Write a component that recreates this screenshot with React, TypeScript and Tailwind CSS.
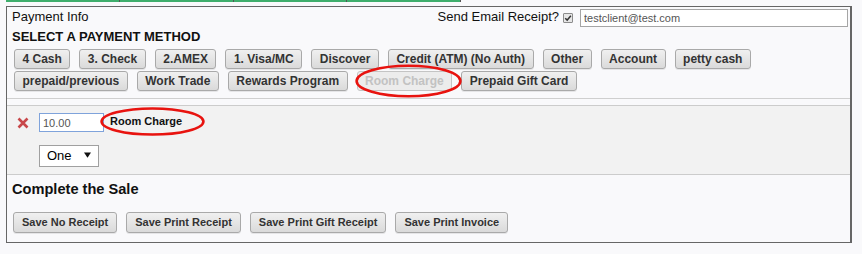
const methodsRow1 = [
  "4 Cash",
  "3. Check",
  "2.AMEX",
  "1. Visa/MC",
  "Discover",
  "Credit (ATM) (No Auth)",
  "Other",
  "Account",
  "petty cash",
];

const methodsRow2 = ["prepaid/previous", "Work Trade", "Rewards Program", "Room Charge", "Prepaid Gift Card"];

const saveButtons = ["Save No Receipt", "Save Print Receipt", "Save Print Gift Receipt", "Save Print Invoice"];

function PayButton({ label, disabled }: { label: string; disabled?: boolean }) {
  return (
    <button
      className={
        disabled
          ? "h-[20px] px-[7.5px] text-[12px] leading-[14px] font-bold rounded-[3px] border border-[#c4c4c4] bg-[#ececec] text-[#c2c2c2] whitespace-nowrap"
          : "h-[20px] px-[7.5px] text-[12px] leading-[14px] font-bold rounded-[3px] border border-[#a9a9a9] bg-linear-to-b from-[#f0f0f0] to-[#dadada] text-[#333] whitespace-nowrap shadow-[0_1px_0_rgba(0,0,0,0.08)]"
      }
    >
      {label}
    </button>
  );
}

function Ellipse({ className }: { className: string }) {
  return (
    <svg className={className} viewBox="0 0 100 100" preserveAspectRatio="none" aria-hidden="true">
      <ellipse cx="50" cy="50" rx="48.5" ry="45" fill="none" stroke="#e8130f" strokeWidth="2.6" vectorEffect="non-scaling-stroke" />
    </svg>
  );
}

export default function App() {
  return (
    <div className="w-[862px] h-[254px] bg-[#f9f9fb] font-['Liberation_Sans',Arial,sans-serif] text-[#111] overflow-hidden">
      {/* top tab strip */}
      <div className="flex h-[2px] ml-[6px] w-[455px]">
        <div className="w-[114px] bg-[#3fae6c] border-r border-[#555]" />
        <div className="w-[114px] bg-[#3fae6c] border-r border-[#555]" />
        <div className="w-[113px] bg-[#3fae6c] border-r border-[#555]" />
        <div className="w-[114px] bg-[#3fae6c] border-r border-[#555]" />
      </div>

      <div className="relative ml-[6px] mt-[4px] w-[846px] h-[237px] border border-r-2 border-[#666] bg-[#f9f9fb]">
        {/* header */}
        <div className="flex items-start justify-between pl-[5px] pr-[2px] pt-[1px]">
          <div className="text-[13px] leading-[15px] mt-[1px]">Payment Info</div>
          <div className="flex items-start">
            <span className="text-[13px] leading-[15px] mt-[1px]">Send Email Receipt?</span>
            <span className="ml-[4px] mt-[5px] w-[10px] h-[10px] border border-[#8c8c8c] bg-[#e6e6e6] rounded-[1px] flex items-center justify-center">
              <svg viewBox="0 0 10 10" className="w-[8px] h-[8px]">
                <path d="M1.5 5.2 L4 7.6 L8.6 2.2" fill="none" stroke="#333" strokeWidth="1.8" />
              </svg>
            </span>
            <input
              readOnly
              value="testclient@test.com"
              className="ml-[7px] mt-[1px] w-[268px] h-[18px] border border-[#a5a5a5] bg-white px-[3px] text-[11px] text-[#555] outline-none"
            />
          </div>
        </div>

        <div className="pl-[5px] mt-[2px] text-[13px] leading-[15px] font-bold">SELECT A PAYMENT METHOD</div>

        {/* payment methods */}
        <div className="pl-[7px] mt-[5px] flex flex-col gap-[2px]">
          <div className="flex gap-x-[9px]">
            {methodsRow1.map((m) => (
              <PayButton key={m} label={m} />
            ))}
          </div>
          <div className="flex gap-x-[9px]">
            {methodsRow2.map((m) => (
              <PayButton key={m} label={m} disabled={m === "Room Charge"} />
            ))}
          </div>
        </div>

        <div className="mt-[7px] border-t border-[#cfcfcf]" />

        {/* selected payment */}
        <div className="mt-[6px] bg-[#f2f2f2] border-y border-[#cccccc] pt-[7px] pb-[7px] pl-[10px]">
          <div className="flex items-start">
            <svg viewBox="0 0 12 12" className="w-[12px] h-[12px] mt-[4px]">
              <path d="M1.5 1.5 L10.5 10.5 M10.5 1.5 L1.5 10.5" stroke="#c8474a" strokeWidth="2.6" strokeLinecap="butt" />
            </svg>
            <input
              readOnly
              value="10.00"
              className="ml-[10px] w-[65px] h-[19px] border border-[#7fa3db] bg-white px-[3px] text-[11px] text-[#555] outline-none"
            />
            <span className="ml-[6px] mt-[2px] text-[11px] leading-[13px] font-bold">Room Charge</span>
          </div>
          <div className="ml-[22px] mt-[13px] w-[60px] h-[22px] border border-[#a0a0a0] bg-white flex items-center justify-between pl-[7px] pr-[7px]">
            <span className="text-[13px] text-black">One</span>
            <svg viewBox="0 0 8 6" className="w-[7px] h-[6px] mb-[2px]">
              <path d="M0 0 H8 L4 6 Z" fill="#111" />
            </svg>
          </div>
        </div>

        {/* complete */}
        <div className="pl-[5px] mt-[6px] text-[14.6px] leading-[17px] font-bold">Complete the Sale</div>
        <div className="pl-[6px] mt-[14px] flex gap-x-[9px]">
          {saveButtons.map((b) => (
            <button
              key={b}
              className="h-[21px] px-[8px] text-[11px] leading-[13px] font-bold rounded-[3px] border border-[#a9a9a9] bg-linear-to-b from-[#f0f0f0] to-[#dadada] text-[#333] whitespace-nowrap shadow-[0_1px_0_rgba(0,0,0,0.08)]"
            >
              {b}
            </button>
          ))}
        </div>

        {/* annotation marks */}
        <Ellipse className="absolute left-[348px] top-[57px] w-[107px] h-[34px] pointer-events-none" />
        <Ellipse className="absolute left-[93px] top-[100px] w-[105px] h-[29px] pointer-events-none" />
      </div>
    </div>
  );
}
